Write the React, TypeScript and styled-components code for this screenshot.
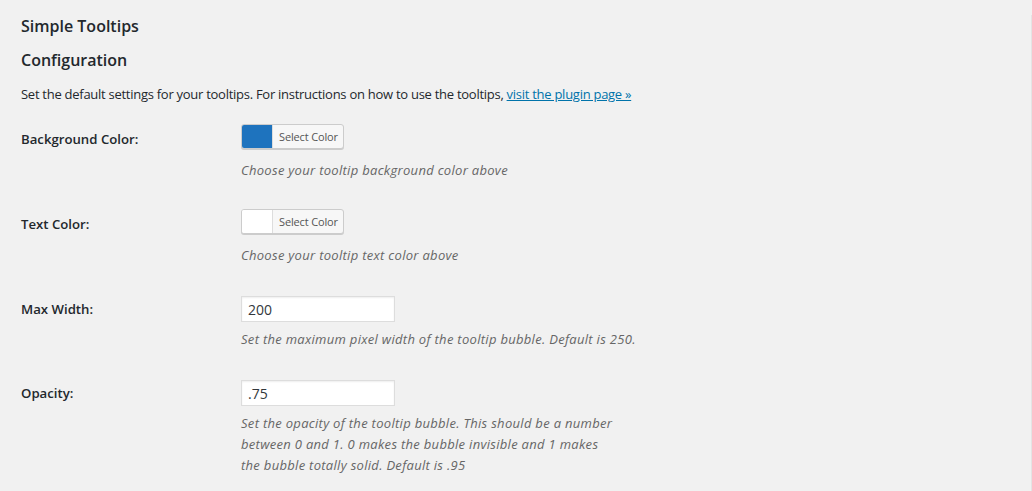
import React from 'react';
import styled, { createGlobalStyle } from 'styled-components';

const GlobalStyle = createGlobalStyle`
  html, body {
    margin: 0;
    padding: 0;
    background: #f1f1f1;
  }
  body {
    font-family: "Open Sans", "Noto Sans", sans-serif;
    color: #23282d;
    font-size: 13px;
  }
`;

const Wrap = styled.div`
  position: relative;
  padding: 14px 20px 0 21px;
  min-height: 491px;
  box-sizing: border-box;

  &::after {
    content: '';
    position: absolute;
    top: 15px;
    right: 0;
    bottom: 0;
    width: 1px;
    background: #e4e4e4;
  }
`;

const Title = styled.h1`
  margin: 0;
  font-size: 16px;
  line-height: 24px;
  font-weight: 600;
`;

const Section = styled.h2`
  margin: 10px 0 0;
  font-size: 16px;
  line-height: 24px;
  font-weight: 600;
`;

const Intro = styled.p`
  margin: 12px 0 0;
  font-size: 13px;
  line-height: 21px;
  letter-spacing: -0.27px;

  a {
    color: #0073aa;
    text-decoration: underline;
  }
`;

const FormTable = styled.div`
  margin-top: 4px;
  display: grid;
  grid-template-columns: 220px 1fr;
`;

const Label = styled.div<{ $top: number }>`
  padding: ${(p) => p.$top}px 0 13px;
  font-size: 13.2px;
  line-height: 26px;
  font-weight: 600;
`;

const Field = styled.div<{ $top: number; $gap: number }>`
  padding: ${(p) => p.$top}px 0 13px;
  display: flex;
  flex-direction: column;
  align-items: flex-start;
  gap: ${(p) => p.$gap}px;
`;

const ColorButton = styled.button`
  display: flex;
  align-items: stretch;
  height: 25px;
  margin: 0;
  padding: 0;
  border: 1px solid #ccc;
  border-radius: 3px;
  background: #f7f7f7;
  box-shadow: 0 1px 0 #ccc;
  overflow: hidden;
  cursor: pointer;
  font-family: inherit;
`;

const Swatch = styled.span<{ $color: string }>`
  width: 30px;
  background: ${(p) => p.$color};
  border-right: 1px solid #ddd;
`;

const ButtonText = styled.span`
  display: flex;
  align-items: center;
  padding: 0 5px 0 6px;
  font-size: 11px;
  letter-spacing: -0.15px;
  color: #555;
`;

const TextInput = styled.input`
  box-sizing: border-box;
  width: 154px;
  height: 26px;
  margin: 0;
  padding: 3px 6px;
  border: 1px solid #ddd;
  box-shadow: inset 0 1px 2px rgba(0, 0, 0, 0.07);
  background: #fff;
  color: #32373c;
  font-family: inherit;
  font-size: 14px;
  outline: none;
`;

const Description = styled.p<{ $maxWidth?: number }>`
  margin: 0;
  max-width: ${(p) => (p.$maxWidth ? `${p.$maxWidth}px` : 'none')};
  font-size: 13px;
  line-height: 21px;
  letter-spacing: 0.3px;
  font-style: italic;
  color: #666;
`;

type Row =
  | { kind: 'color'; label: string; color: string; help: string; helpWidth?: number }
  | { kind: 'text'; label: string; value: string; help: string; helpWidth?: number };

const rows: Row[] = [
  { kind: 'color', label: 'Background Color:', color: '#1e73be', help: 'Choose your tooltip background color above' },
  { kind: 'color', label: 'Text Color:', color: '#ffffff', help: 'Choose your tooltip text color above' },
  { kind: 'text', label: 'Max Width:', value: '200', help: 'Set the maximum pixel width of the tooltip bubble. Default is 250.' },
  {
    kind: 'text',
    label: 'Opacity:',
    value: '.75',
    help: 'Set the opacity of the tooltip bubble. This should be a number between 0 and 1. 0 makes the bubble invisible and 1 makes the bubble totally solid. Default is .95',
    helpWidth: 376,
  },
];

const App: React.FC = () => {
  return (
    <>
      <GlobalStyle />
      <Wrap>
        <Title>Simple Tooltips</Title>
        <Section>Configuration</Section>
        <Intro>
          Set the default settings for your tooltips. For instructions on how to use the tooltips,{' '}
          <a href="#">visit the plugin page »</a>
        </Intro>
        <FormTable>
          {rows.map((row) => (
            <React.Fragment key={row.label}>
              {row.kind === 'color' ? (
                <>
                  <Label $top={17}>{row.label}</Label>
                  <Field $top={15} $gap={11}>
                    <ColorButton type="button">
                      <Swatch $color={row.color} />
                      <ButtonText>Select Color</ButtonText>
                    </ColorButton>
                    <Description $maxWidth={row.helpWidth}>{row.help}</Description>
                  </Field>
                </>
              ) : (
                <>
                  <Label $top={17}>{row.label}</Label>
                  <Field $top={17} $gap={7}>
                    <TextInput type="text" defaultValue={row.value} />
                    <Description $maxWidth={row.helpWidth}>{row.help}</Description>
                  </Field>
                </>
              )}
            </React.Fragment>
          ))}
        </FormTable>
      </Wrap>
    </>
  );
};

export default App;
